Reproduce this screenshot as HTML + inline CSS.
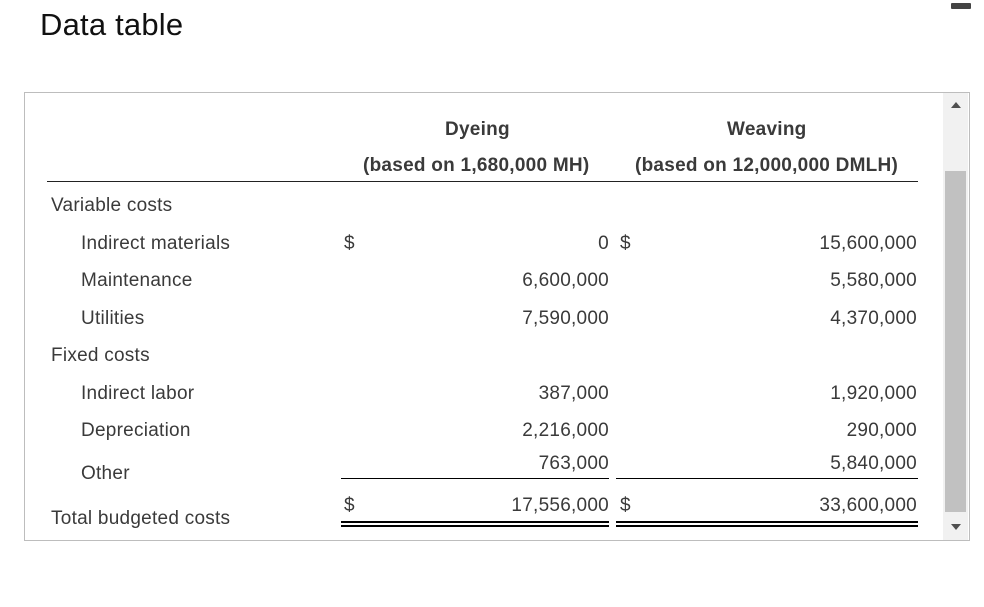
<!DOCTYPE html>
<html><head><style>
body{margin:0;width:984px;height:607px;background:#fff;position:relative;font-family:"Liberation Sans",Arial,sans-serif;color:#3a3a3a;overflow:hidden}
.t{position:absolute;font-size:19px;letter-spacing:0.25px;line-height:20px;white-space:nowrap;margin-top:1px}
.r{text-align:right}
.b{font-weight:bold}
.l{position:absolute;height:2px;background:#000}
</style></head><body>
<div class="t" style="left:40px;top:7px;font-size:31px;letter-spacing:0.2px;line-height:34px;color:#111">Data table</div>
<div style="position:absolute;left:951px;top:3px;width:20px;height:6px;background:#444;border-radius:1px"></div>
<div style="position:absolute;left:24px;top:92px;width:944px;height:447px;border:1px solid #bdbdbd"></div>
<div style="position:absolute;left:943px;top:93px;width:25px;height:447px;background:#f1f1f1"></div>
<div style="position:absolute;left:945px;top:171px;width:21px;height:341px;background:#c1c1c1"></div>
<div style="position:absolute;left:951px;top:102px;width:0;height:0;border-left:5px solid transparent;border-right:5px solid transparent;border-bottom:6px solid #505050"></div>
<div style="position:absolute;left:951px;top:524px;width:0;height:0;border-left:5px solid transparent;border-right:5px solid transparent;border-top:6px solid #505050"></div>

<div class="t b" style="left:445px;top:119px">Dyeing</div>
<div class="t b" style="left:727px;top:119px">Weaving</div>
<div class="t b" style="left:363px;top:155px">(based on 1,680,000 MH)</div>
<div class="t b" style="left:635px;top:155px">(based on 12,000,000 DMLH)</div>
<div class="l" style="left:47px;top:181px;width:871px;height:1px;background:#222"></div>

<div class="t" style="left:51px;top:195px">Variable costs</div>
<div class="t" style="left:81px;top:233px">Indirect materials</div>
<div class="t" style="left:81px;top:270px">Maintenance</div>
<div class="t" style="left:81px;top:308px">Utilities</div>
<div class="t" style="left:51px;top:345px">Fixed costs</div>
<div class="t" style="left:81px;top:383px">Indirect labor</div>
<div class="t" style="left:81px;top:420px">Depreciation</div>
<div class="t" style="left:81px;top:463px">Other</div>
<div class="t" style="left:51px;top:508px">Total budgeted costs</div>

<div class="t" style="left:344px;top:233px">$</div>
<div class="t" style="left:620px;top:233px">$</div>
<div class="t" style="left:344px;top:495px">$</div>
<div class="t" style="left:620px;top:495px">$</div>

<div class="t r" style="right:375px;top:233px">0</div>
<div class="t r" style="right:375px;top:270px">6,600,000</div>
<div class="t r" style="right:375px;top:308px">7,590,000</div>
<div class="t r" style="right:375px;top:383px">387,000</div>
<div class="t r" style="right:375px;top:420px">2,216,000</div>
<div class="t r" style="right:375px;top:453px">763,000</div>
<div class="t r" style="right:375px;top:495px">17,556,000</div>

<div class="t r" style="right:67px;top:233px">15,600,000</div>
<div class="t r" style="right:67px;top:270px">5,580,000</div>
<div class="t r" style="right:67px;top:308px">4,370,000</div>
<div class="t r" style="right:67px;top:383px">1,920,000</div>
<div class="t r" style="right:67px;top:420px">290,000</div>
<div class="t r" style="right:67px;top:453px">5,840,000</div>
<div class="t r" style="right:67px;top:495px">33,600,000</div>

<div class="l" style="left:341px;top:478px;width:268px;height:1px"></div>
<div class="l" style="left:616px;top:478px;width:302px;height:1px"></div>
<div class="l" style="left:341px;top:521px;width:268px"></div>
<div class="l" style="left:341px;top:525px;width:268px"></div>
<div class="l" style="left:616px;top:521px;width:302px"></div>
<div class="l" style="left:616px;top:525px;width:302px"></div>
</body></html>
